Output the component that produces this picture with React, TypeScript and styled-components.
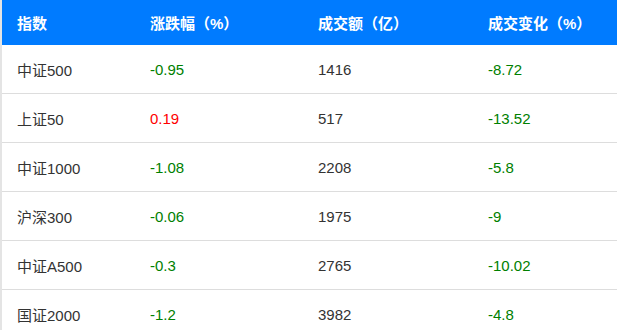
import styled, { createGlobalStyle } from "styled-components";

const GlobalStyle = createGlobalStyle`
  body {
    margin: 0;
    background: #fff;
    font-family: "Liberation Sans", "Noto Sans CJK SC", Arial, sans-serif;
  }
`;

const TableWrapper = styled.div`
  border-left: 2px solid #e4e4e4;
  overflow: hidden;
  width: 615px;
`;

const Table = styled.table`
  border-collapse: collapse;
  table-layout: fixed;
  width: 700px;
  font-size: 15px;
`;

const HeadCell = styled.th`
  background: #007bff;
  color: #fff;
  font-weight: bold;
  text-align: left;
  height: 45px;
  padding: 0 15px;
  box-sizing: border-box;
  vertical-align: middle;
`;

const Row = styled.tr`
  border-bottom: 1px solid #dddddd;
`;

const Cell = styled.td<{ $tone?: "up" | "down" }>`
  height: 48px;
  padding: 0 15px;
  vertical-align: middle;
  color: ${({ $tone }) => ($tone === "up" ? "#ff0000" : $tone === "down" ? "#008000" : "#333")};
`;

type IndexRow = {
  name: string;
  change: string;
  volume: string;
  volumeChange: string;
};

const rows: IndexRow[] = [
  { name: "中证500", change: "-0.95", volume: "1416", volumeChange: "-8.72" },
  { name: "上证50", change: "0.19", volume: "517", volumeChange: "-13.52" },
  { name: "中证1000", change: "-1.08", volume: "2208", volumeChange: "-5.8" },
  { name: "沪深300", change: "-0.06", volume: "1975", volumeChange: "-9" },
  { name: "中证A500", change: "-0.3", volume: "2765", volumeChange: "-10.02" },
  { name: "国证2000", change: "-1.2", volume: "3982", volumeChange: "-4.8" },
];

const tone = (value: string) => (value.startsWith("-") ? "down" : "up");

export default function App() {
  return (
    <>
      <GlobalStyle />
      <TableWrapper>
        <Table>
          <colgroup>
            <col style={{ width: 133 }} />
            <col style={{ width: 168 }} />
            <col style={{ width: 170 }} />
            <col />
          </colgroup>
          <thead>
            <tr>
              <HeadCell>指数</HeadCell>
              <HeadCell>涨跌幅（%）</HeadCell>
              <HeadCell>成交额（亿）</HeadCell>
              <HeadCell>成交变化（%）</HeadCell>
            </tr>
          </thead>
          <tbody>
            {rows.map((row) => (
              <Row key={row.name}>
                <Cell>{row.name}</Cell>
                <Cell $tone={tone(row.change)}>{row.change}</Cell>
                <Cell>{row.volume}</Cell>
                <Cell $tone={tone(row.volumeChange)}>{row.volumeChange}</Cell>
              </Row>
            ))}
          </tbody>
        </Table>
      </TableWrapper>
    </>
  );
}
